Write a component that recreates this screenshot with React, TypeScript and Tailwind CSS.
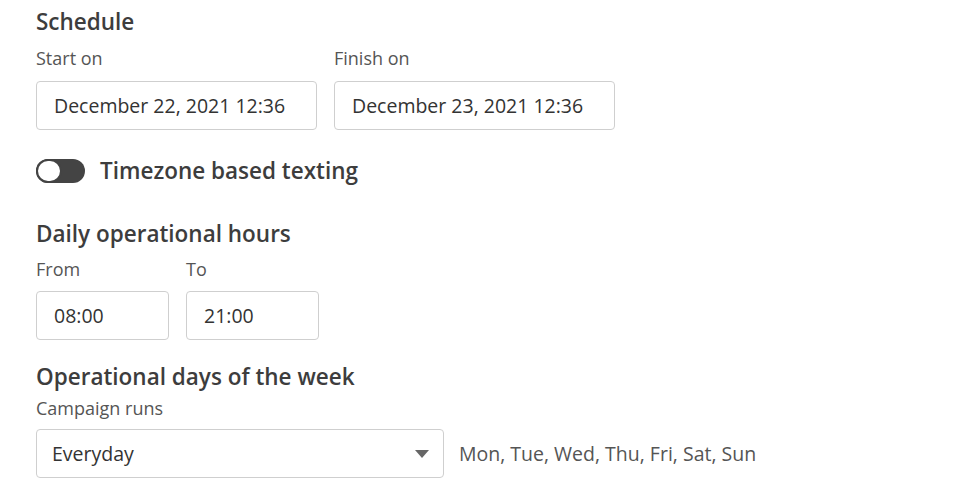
import React from "react";

const font = { fontFamily: '"Open Sans", "Liberation Sans", sans-serif' };

function Field({ value, w }: { value: string; w: string }) {
  return (
    <div className={`${w} h-[49px] border border-[#cfcfcf] rounded-[4px] bg-white flex items-center px-[17px] text-[19.5px] text-[#333]`}>
      {value}
    </div>
  );
}

export default function App() {
  return (
    <div style={font} className="bg-white w-[980px] h-[500px] pl-[36px] pt-[8px] text-[#333]">
      <h2 className="text-[22.5px] font-semibold text-[#3d3d3d] leading-[28px]">Schedule</h2>
      <div className="flex gap-[17px] mt-[10px]">
        <div>
          <div className="text-[18px] text-[#555] leading-[24px] mb-[11px]">Start on</div>
          <Field value="December 22, 2021 12:36" w="w-[281px]" />
        </div>
        <div>
          <div className="text-[18px] text-[#555] leading-[24px] mb-[11px]">Finish on</div>
          <Field value="December 23, 2021 12:36" w="w-[281px]" />
        </div>
      </div>
      <div className="flex items-center gap-[15px] mt-[26px] h-[30px]">
        <div className="w-[49px] h-[24px] rounded-full bg-[#444] relative">
          <div className="absolute left-0 top-0 w-[26px] h-[24px] rounded-full bg-white border-2 border-[#444]"></div>
        </div>
        <span className="text-[22.5px] font-semibold text-[#3d3d3d] leading-[30px]">Timezone based texting</span>
      </div>
      <h2 className="text-[22.5px] font-semibold text-[#3d3d3d] leading-[30px] mt-[33px]">Daily operational hours</h2>
      <div className="flex gap-[17px] mt-[8px]">
        <div>
          <div className="text-[18px] text-[#555] leading-[24px] mb-[10px]">From</div>
          <Field value="08:00" w="w-[133px]" />
        </div>
        <div>
          <div className="text-[18px] text-[#555] leading-[24px] mb-[10px]">To</div>
          <Field value="21:00" w="w-[133px]" />
        </div>
      </div>
      <h2 className="text-[22.5px] font-semibold text-[#3d3d3d] leading-[30px] mt-[22px]">Operational days of the week</h2>
      <div className="text-[18px] text-[#555] leading-[24px] mt-[4px]">Campaign runs</div>
      <div className="flex items-center gap-[15px] mt-[9px]">
        <div className="w-[408px] h-[49px] border border-[#cfcfcf] rounded-[4px] bg-white flex items-center justify-between pl-[15px] pr-[14px] text-[19.5px] text-[#333]">
          <span>Everyday</span>
          <svg width="14" height="8" viewBox="0 0 14 8"><path d="M0 0 L14 0 L7 8 Z" fill="#666" /></svg>
        </div>
        <span className="text-[19.5px] text-[#555]">Mon, Tue, Wed, Thu, Fri, Sat, Sun</span>
      </div>
    </div>
  );
}
